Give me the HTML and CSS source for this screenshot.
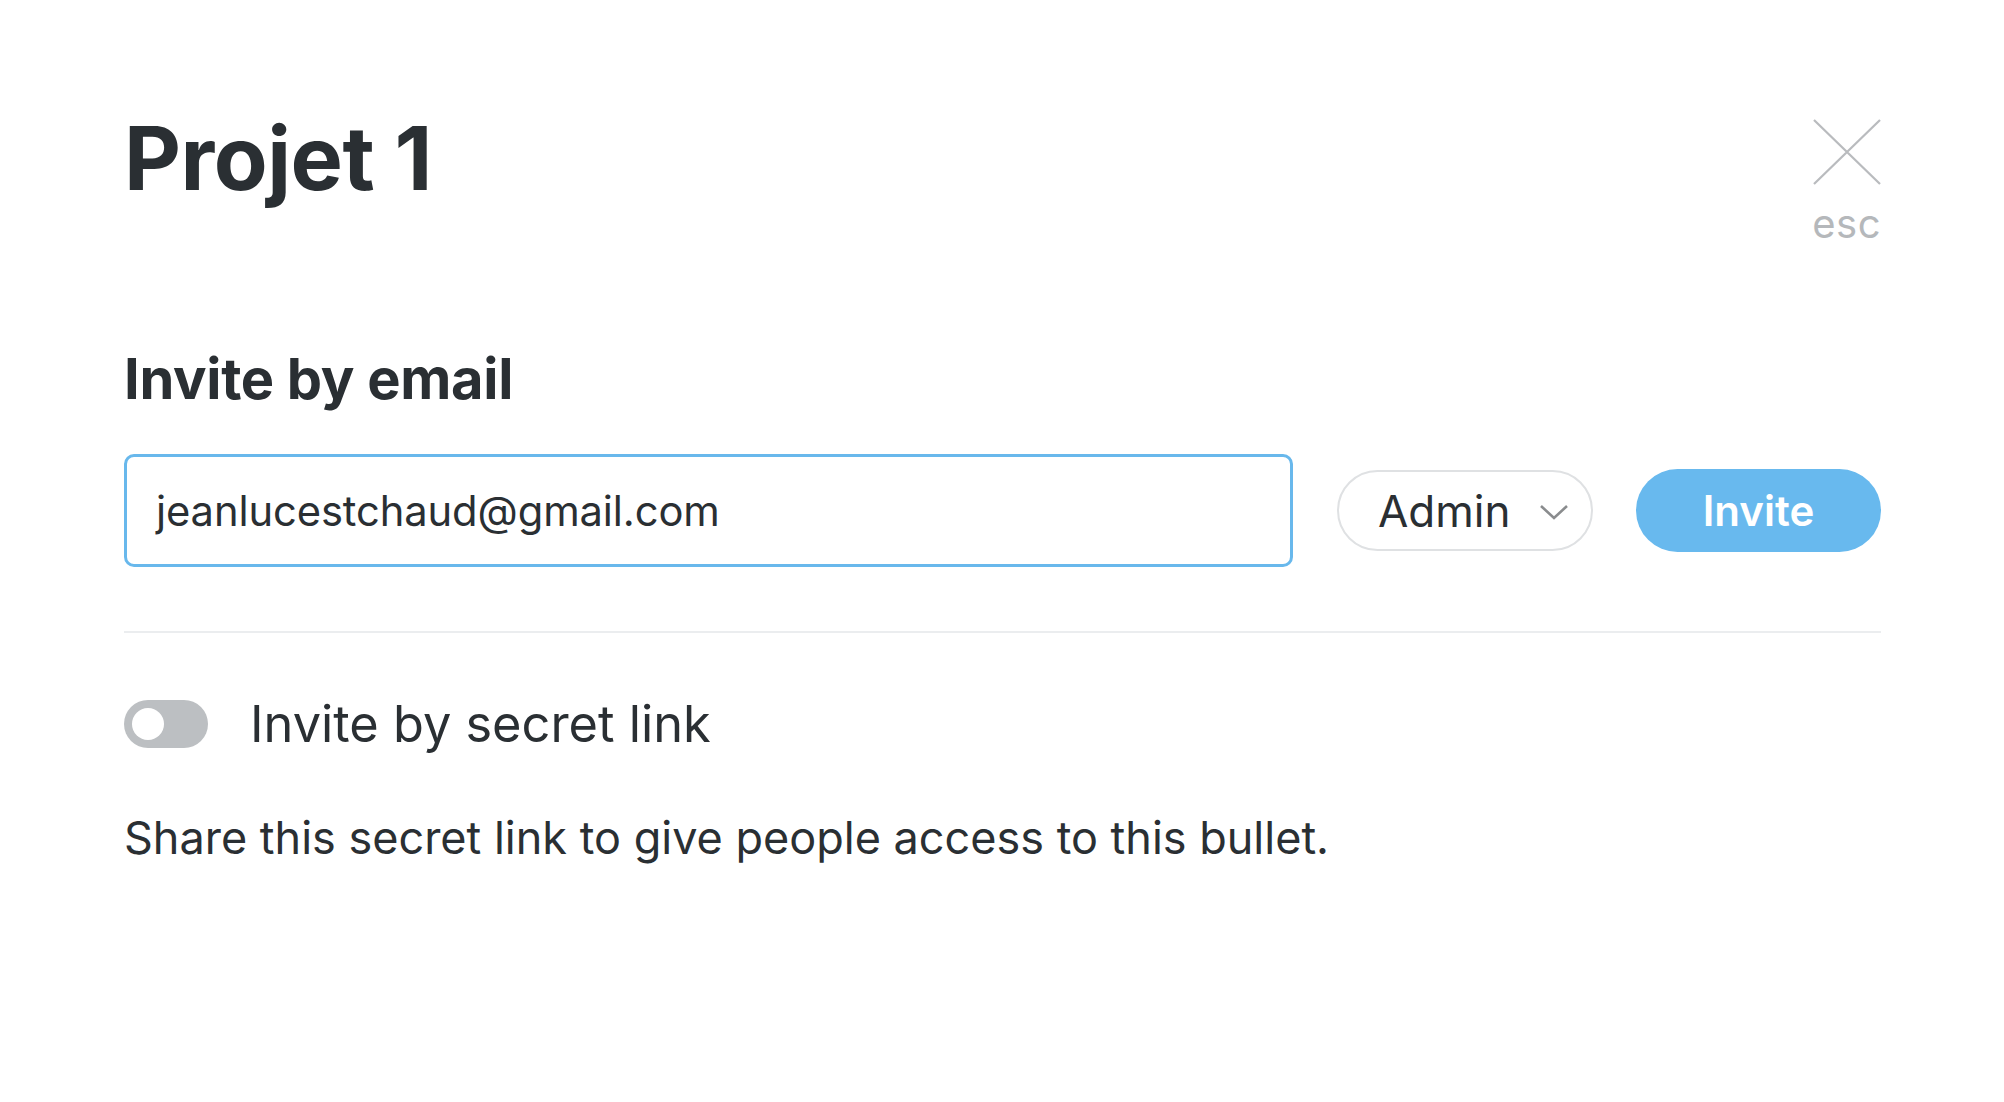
FILE: index.html
```html
<!DOCTYPE html>
<html lang="fr">
<head>
<meta charset="utf-8">
<title>Projet 1</title>
<link rel="stylesheet" href="styles.css">
</head>
<body>
<div class="modal">
  <header class="top">
    <h1 class="title">Projet 1</h1>
    <div class="close">
      <svg class="close-x" width="68" height="66" viewBox="0 0 68 66"><path d="M1 1 L67 65 M67 1 L1 65" stroke="#b9bbbe" stroke-width="2.2" fill="none"/></svg>
      <span class="close-label">esc</span>
    </div>
  </header>

  <h2 class="section-title">Invite by email</h2>
  <div class="invite-row">
    <div class="email-input">jeanlucestchaud@gmail.com</div>
    <div class="role-select">
      <span>Admin</span>
      <svg class="chev" width="30" height="16" viewBox="0 0 30 16"><path d="M2 2 L15 14 L28 2" stroke="#8a8c8e" stroke-width="2.6" fill="none"/></svg>
    </div>
    <button class="invite-btn">Invite</button>
  </div>

  <div class="divider"></div>

  <div class="link-row">
    <span class="switch"><span class="knob"></span></span>
    <span class="link-label">Invite by secret link</span>
  </div>
  <p class="desc">Share this secret link to give people access to this bullet.</p>
</div>
</body>
</html>
```

FILE: styles.css
```css
html, body {
  margin: 0;
  padding: 0;
  background: #ffffff;
}
body {
  font-family: Inter, "Noto Sans", "Liberation Sans", sans-serif;
  color: #2a2f33;
}
.modal {
  padding: 0 123px 0 124px;
}
.top {
  display: flex;
  justify-content: space-between;
  align-items: flex-start;
  padding-top: 114px;
}
.title {
  margin: 0;
  font-size: 88px;
  line-height: 88px;
  font-weight: 700;
  letter-spacing: -0.5px;
}
.close {
  display: flex;
  flex-direction: column;
  align-items: center;
  margin-top: 5px;
  color: #b5b8bb;
}
.close-x {
  display: block;
}
.close-label {
  font-size: 40px;
  line-height: 40px;
  margin-top: 19px;
  letter-spacing: 0.5px;
}
.section-title {
  margin: 105px 0 0;
  font-size: 56px;
  line-height: 60px;
  font-weight: 700;
  letter-spacing: -0.3px;
}
.invite-row {
  display: flex;
  align-items: center;
  margin-top: 45px;
}
.email-input {
  flex: 1;
  box-sizing: border-box;
  height: 113px;
  border: 3px solid #68b8ec;
  border-radius: 10px;
  padding: 0 29px;
  display: flex;
  align-items: center;
  font-size: 41.7px;
  letter-spacing: -0.1px;
}
.role-select {
  box-sizing: border-box;
  width: 256px;
  height: 81px;
  margin-left: 44px;
  border: 2.5px solid #dfe1e3;
  border-radius: 41px;
  display: flex;
  align-items: center;
  padding-left: 39px;
  font-size: 44px;
  gap: 28px;
}
.chev {
  display: block;
  margin-top: 2px;
}
.invite-btn {
  box-sizing: border-box;
  width: 245px;
  height: 83px;
  margin-left: 43px;
  border: none;
  border-radius: 42px;
  background: #68b9ee;
  color: #ffffff;
  font-family: inherit;
  font-size: 42px;
  font-weight: 600;
  padding: 0;
}
.divider {
  height: 2px;
  background: #ebedef;
  margin-top: 64px;
}
.link-row {
  display: flex;
  align-items: center;
  margin-top: 60px;
}
.switch {
  box-sizing: border-box;
  width: 84px;
  height: 48px;
  border-radius: 24px;
  background: #bcbfc2;
  padding: 8px;
  display: flex;
  align-items: center;
}
.knob {
  width: 32px;
  height: 32px;
  border-radius: 50%;
  background: #ffffff;
}
.link-label {
  margin-left: 42px;
  font-size: 50.5px;
}
.desc {
  margin: 58px 0 0;
  font-size: 45px;
  line-height: 52px;
}
```
